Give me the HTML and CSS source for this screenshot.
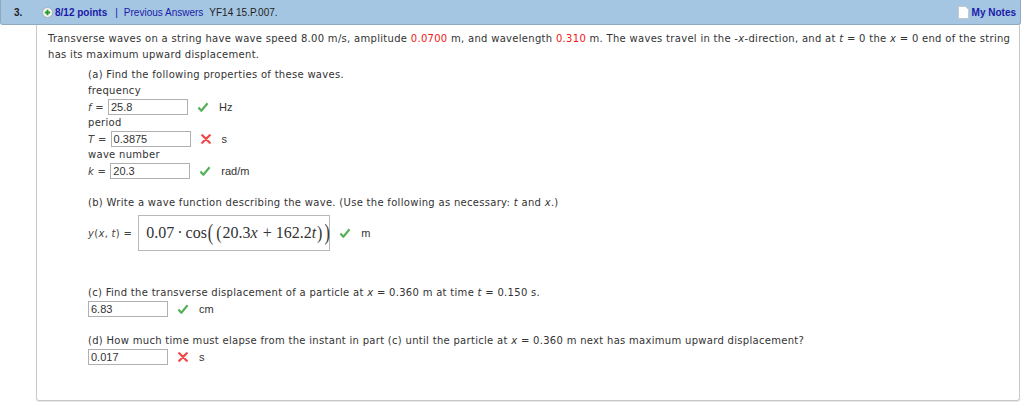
FILE: index.html
```html
<!DOCTYPE html>
<html>
<head>
<meta charset="utf-8">
<link rel="stylesheet" href="styles.css">
</head>
<body>
<div class="question">
  <div class="header">
    <span class="qnum">3.</span>
    <span class="plus"><svg width="11" height="11" viewBox="0 0 11 11"><circle cx="5.5" cy="5.5" r="5" fill="#f4f4f4" stroke="#9aa" stroke-width="0.8"/><path d="M5.5 2.8v5.4M2.8 5.5h5.4" stroke="#1f9a2a" stroke-width="1.8"/></svg></span>
    <span class="points">8/12 points</span>
    <span class="sep">|</span>
    <span class="prev">Previous Answers</span>
    <span class="code">YF14 15.P.007.</span>
    <span class="spacer"></span>
    <span class="notes"><svg width="11" height="13" viewBox="0 0 11 13"><path d="M0.5 0.5h7l3 3v9h-10z" fill="#fff" stroke="#c8c8c8"/></svg>My Notes</span>
  </div>
  <div class="body">
    <p class="intro">Transverse waves on a string have wave speed 8.00 m/s, amplitude <span class="red">0.0700</span> m, and wavelength <span class="red">0.310</span> m. The waves travel in the -<i>x</i>-direction, and at <i>t</i> = 0 the <i>x</i> = 0 end of the string has its maximum upward displacement.</p>
    <div class="parts">
      <div class="part-a">
        <div class="line">(a) Find the following properties of these waves.</div>
        <div class="line">frequency</div>
        <div class="row"><span class="var"><i>f</i> =</span><span class="box w80">25.8</span><span class="ok"></span><span class="unit">Hz</span></div>
        <div class="line">period</div>
        <div class="row"><span class="var"><i>T</i> =</span><span class="box w80">0.3875</span><span class="bad"></span><span class="unit">s</span></div>
        <div class="line">wave number</div>
        <div class="row"><span class="var"><i>k</i> =</span><span class="box w80">20.3</span><span class="ok"></span><span class="unit">rad/m</span></div>
      </div>
      <div class="part-b">
        <div class="line">(b) Write a wave function describing the wave. (Use the following as necessary: <i>t</i> and <i>x</i>.)</div>
        <div class="row mrow"><span class="var mvar"><i>y</i>(<i>x</i>, <i>t</i>) =</span><span class="mathbox">0.07<span class="dot">·</span>cos<span class="big">(</span><span class="mid">(</span>20.3<i>x</i><span class="op">+</span>162.2<i>t</i><span class="mid">)</span><span class="big">)</span></span><span class="ok"></span><span class="unit">m</span></div>
      </div>
      <div class="part-c">
        <div class="line">(c) Find the transverse displacement of a particle at <i>x</i> = 0.360 m at time <i>t</i> = 0.150 s.</div>
        <div class="row"><span class="box w80">6.83</span><span class="ok"></span><span class="unit">cm</span></div>
      </div>
      <div class="part-d">
        <div class="line">(d) How much time must elapse from the instant in part (c) until the particle at <i>x</i> = 0.360 m next has maximum upward displacement?</div>
        <div class="row"><span class="box w80">0.017</span><span class="bad"></span><span class="unit">s</span></div>
      </div>
    </div>
  </div>
</div>
</body>
</html>
```
FILE: styles.css
```css
html, body { margin: 0; padding: 0; background: #fff; }
body { width: 1024px; height: 418px; overflow: hidden; font-family: "DejaVu Sans", Verdana, sans-serif; font-size: 10px; color: #333; letter-spacing: 0.3px; }

.question { width: 1021px; }

.header {
  display: flex; align-items: center;
  height: 25px; box-sizing: border-box;
  background: #a5c6e2;
  border: 1px solid #8fa9bf; border-top: none;
  border-radius: 0 0 3px 3px;
  font-family: "Liberation Sans", Arial, sans-serif; font-size: 10px; letter-spacing: 0;
  padding: 0 4px 0 13px;
}
.qnum { font-weight: bold; color: #222; width: 28px; }
.plus { display: inline-flex; margin-right: 2px; }
.points { font-weight: bold; color: #1a1aa8; }
.sep { color: #1a1aa8; margin: 0 6px 0 8px; }
.prev { color: #1a1aa8; margin-right: 6px; }
.code { color: #222; }
.spacer { flex: 1; }
.notes { display: inline-flex; align-items: center; gap: 3px; font-weight: bold; color: #1a1aa8; }

.body {
  margin-left: 36px; width: 984px; height: 376px; box-sizing: border-box;
  border: 1px solid #c8c8c8; border-top: none;
  border-radius: 0 0 3px 3px;
  box-shadow: 0 1px 0 #e6e6e6;
  padding: 6px 0 0 11px;
}
.intro { margin: 0; line-height: 16px; width: 965px; }
.red { color: #f21818; }
.parts { padding-left: 40px; padding-top: 4px; }
.line { line-height: 16px; height: 16px; }
.row { display: flex; align-items: center; height: 16px; }
.var { margin-right: 4px; color: #444; }
.mvar { margin-right: 6px; }
.box {
  display: inline-block; box-sizing: border-box; height: 16px; line-height: 14px;
  border: 1px solid #b0b0b0; padding-left: 2px; letter-spacing: 0;
  font-family: "Liberation Sans", Arial, sans-serif; font-size: 11px; color: #333;
}
.w80 { width: 80px; }
.ok, .bad { display: inline-block; width: 12px; height: 11px; margin-left: 9px; margin-right: 10px; }
.ok { background: no-repeat center/contain url("data:image/svg+xml,%3Csvg xmlns='http://www.w3.org/2000/svg' viewBox='0 0 14 12'%3E%3Cpath d='M1.5 6.5l3.5 4 7.5-9' fill='none' stroke='%2356b05a' stroke-width='2.6' stroke-linejoin='round'/%3E%3C/svg%3E"); }
.bad { background: no-repeat center/contain url("data:image/svg+xml,%3Csvg xmlns='http://www.w3.org/2000/svg' viewBox='0 0 14 12'%3E%3Cpath d='M2.5 1.5l9 9M11.5 1.5l-9 9' fill='none' stroke='%23f24a4a' stroke-width='2.8' stroke-linecap='round'/%3E%3C/svg%3E"); }
.unit { font-family: "Liberation Sans", Arial, sans-serif; font-size: 11px; color: #333; letter-spacing: 0; }

.part-b { margin-top: 16px; }
.mrow { height: 36px; margin-top: 4px; }
.mathbox {
  display: inline-flex; align-items: center; box-sizing: border-box;
  height: 36px; width: 192px; padding: 0 6px 0 7px;
  border: 1px solid #b8b8b8; letter-spacing: 0;
  font-family: "Liberation Serif", "Times New Roman", serif; font-size: 16px; color: #333;
  white-space: nowrap;
}
.dot { margin: 0 3px; }
.big { display: inline-block; transform: scaleY(1.45); margin: 0 2px 0 1px; }
.mid { display: inline-block; transform: scaleY(1.2); margin: 0 1px; }
.op { margin: 0 4px 0 5px; }
.part-c { margin-top: 34px; }
.part-d { margin-top: 16px; }
```
